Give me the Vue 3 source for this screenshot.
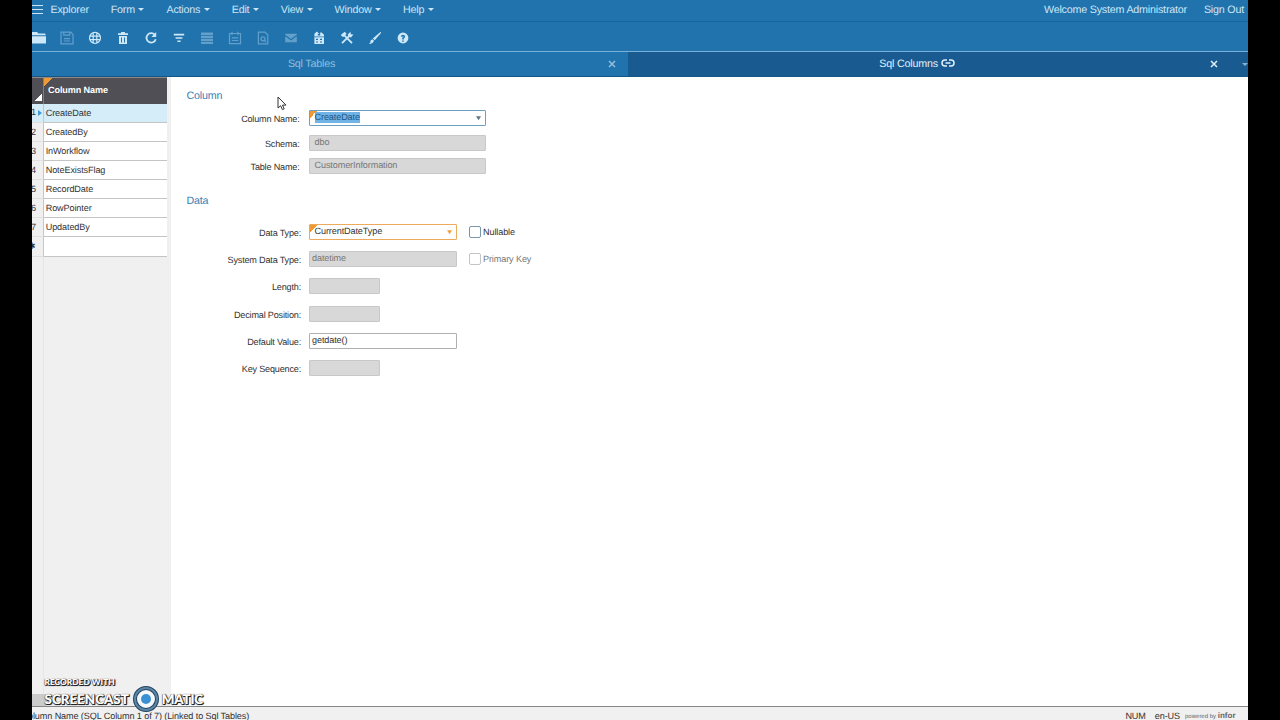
<script setup>
import { ref } from 'vue'

const menus = ['Form', 'Actions', 'Edit', 'View', 'Window', 'Help']

// Each tool has a filled part and / or a stroked part, on a 16x16 grid
const tools = [
  { name: 'Open', fill: 'M0 3.2Q0 2 1.2 2H6L7.4 3.6H13.6Q14.6 3.6 14.6 4.6V5.2H0ZM0 6.2H15V13.6H0Z' },
  { name: 'Save', dim: true, stroke: 'M2 2.2H11.8L14 4.4V13.8H2ZM4.8 2.5V5.2H10.8V2.5M5 8.6H11M5 11H11' },
  { name: 'Globe', stroke: 'M8 2.4A5.5 5.5 0 1 0 8 13.4A5.5 5.5 0 1 0 8 2.4ZM2.7 6.2H13.3M2.7 9.7H13.3M6.2 2.8V13M9.8 2.8V13' },
  { name: 'Delete', fill: 'M6 2H10V3.2H13V5H3V3.2H6ZM4 6H12V14H4ZM6 7.5V12.4H7V7.5ZM9 7.5V12.4H10V7.5Z' },
  { name: 'Refresh', stroke: 'M11.8 4.9A4.7 4.7 0 1 0 12.7 9.2', fill: 'M13.2 2V7H8.4Z', bold: true },
  { name: 'Filter', fill: 'M2.8 3.8H13.2V5.5H2.8ZM4.6 7.2H11.4V8.8H4.6ZM6.4 10.4H9.6V12H6.4Z' },
  { name: 'Rows', dim: true, fill: 'M2 2.4H14V5H2ZM2 5.8H14V8H2ZM2 8.8H14V11H2ZM2 11.8H14V14H2Z' },
  { name: 'Notes', dim: true, stroke: 'M2.5 3.5H13.5V13.6H2.5ZM5 1.8V5M11 1.8V5M4.8 7.8H11.2M4.8 10.5H11.2' },
  { name: 'Preview', dim: true, stroke: 'M3.4 2.2H10L12.8 5V13.8H3.4ZM8 6.8A2 2 0 1 0 8 10.8A2 2 0 1 0 8 6.8ZM9.4 10.2L11 12' },
  { name: 'Mail', dim: true, fill: 'M2.2 3.8H13.8V4.8L8 9L2.2 4.8ZM2.2 6.3L8 10.6L13.8 6.3V12.2H2.2Z' },
  { name: 'Attach', fill: 'M5.8 1.6L8.4 4H6.8V5.4H9.2V2.4H10.6L13 4.8V6.6H3.4V4H3.2ZM3.4 7.2H13V14H3.4ZM5 8.8V10H7V8.8ZM9 8.8V10H11V8.8ZM5 11.4V12.6H7V11.4ZM9 11.4V12.6H11V11.4Z' },
  { name: 'Tools', stroke: 'M4.4 4.4L13 13.2M10.6 5.6L3 13.2', fill: 'M1.8 5L5.6 1.8L7.6 3.8L4 7.2ZM8.8 4.6L11.4 1.8L11.8 4.2L14.4 4.6L12 7.4L9.4 6.8Z', bold: true },
  { name: 'Brush', fill: 'M13.4 2L14.2 2.8L7.8 10.2L5.8 8.6ZM5.2 9.2L7 10.8Q6 13.8 2 14Q4 12.2 3.6 10.4Z' },
  { name: 'Help', fill: 'M8 2.6A5.4 5.4 0 1 0 8 13.4A5.4 5.4 0 1 0 8 2.6ZM5.8 6.6Q6 4.8 8 4.8Q10.2 4.8 10.2 6.6Q10.2 7.8 8.8 8.6V9.6H7.2V7.8Q8.8 7.2 8.6 6.6Q8.4 6.2 8 6.2Q7.4 6.2 7.4 6.9ZM7.2 10.4H8.8V11.8H7.2Z' }
]

const columns = ['CreateDate', 'CreatedBy', 'InWorkflow', 'NoteExistsFlag', 'RecordDate', 'RowPointer', 'UpdatedBy']
const selected = ref(0)
const nullable = ref(false)
</script>

<template>
  <div class="app">
    <nav class="menu-bar">
      <span class="burger"><i></i><i></i><i></i></span>
      <span class="explorer">Explorer</span>
      <span v-for="menu in menus" :key="menu" class="menu-item">{{ menu }}<i class="caret"></i></span>
      <span class="welcome">Welcome System Administrator</span>
      <span class="sign-out">Sign Out</span>
    </nav>

    <div class="tool-bar">
      <span v-for="tool in tools" :key="tool.name" class="tool" :class="{ dim: tool.dim, bold: tool.bold }">
        <svg viewBox="0 0 16 16" width="16" height="16">
          <path v-if="tool.fill" class="filled" :d="tool.fill" />
          <path v-if="tool.stroke" class="stroked" :d="tool.stroke" />
        </svg>
      </span>
    </div>

    <div class="tabs">
      <div class="tab">
        <span class="tab-title">Sql Tables</span>
        <svg class="close" viewBox="0 0 8 8" width="8" height="8"><path d="M1 1L7 7M7 1L1 7" /></svg>
      </div>
      <div class="tab active">
        <span class="tab-title">Sql Columns
          <svg class="link" viewBox="0 0 14 8" width="14" height="8"><path d="M6 1H4A3 3 0 0 0 4 7H6M8 1H10A3 3 0 0 1 10 7H8M4.5 4H9.5" /></svg>
        </span>
        <svg class="close" viewBox="0 0 8 8" width="8" height="8"><path d="M1 1L7 7M7 1L1 7" /></svg>
        <i class="caret"></i>
      </div>
    </div>

    <main class="content">
      <aside class="side">
        <div class="grid-head">
          <span class="corner"></span>
          <span class="head-name">Column Name</span>
        </div>
        <div
          v-for="(column, index) in columns"
          :key="column"
          class="grid-row"
          :class="{ selected: selected === index }"
          @click="selected = index"
        >
          <span class="row-number"><b>{{ index + 1 }}</b></span>
          <span class="row-name">{{ column }}</span>
        </div>
        <div class="grid-row">
          <span class="row-number new"><b>✱</b></span>
          <span class="row-name"></span>
        </div>
        <div class="side-fill"></div>
        <div class="side-scroll"></div>
      </aside>

      <section class="form">
        <h2>Column</h2>
        <div class="fields first">
          <div class="field name">
            <label>Column Name:</label>
            <div class="box wide focused marked"><mark>CreateDate</mark><i class="arrow"></i></div>
          </div>
          <div class="field schema">
            <label>Schema:</label>
            <div class="box wide disabled inset">dbo</div>
          </div>
          <div class="field table">
            <label>Table Name:</label>
            <div class="box wide disabled inset">CustomerInformation</div>
          </div>
        </div>

        <h2>Data</h2>
        <div class="fields second">
          <div class="field">
            <label>Data Type:</label>
            <div class="box medium required marked">CurrentDateType<i class="arrow"></i></div>
            <span class="check" @click="nullable = !nullable"><i :class="{ on: nullable }"></i>Nullable</span>
          </div>
          <div class="field">
            <label>System Data Type:</label>
            <div class="box medium disabled">datetime</div>
            <span class="check off"><i></i>Primary Key</span>
          </div>
          <div class="field">
            <label>Length:</label>
            <div class="box small disabled"></div>
          </div>
          <div class="field">
            <label>Decimal Position:</label>
            <div class="box small disabled"></div>
          </div>
          <div class="field">
            <label>Default Value:</label>
            <div class="box medium">getdate()</div>
          </div>
          <div class="field">
            <label>Key Sequence:</label>
            <div class="box small disabled"></div>
          </div>
        </div>
      </section>
    </main>

    <footer class="status">
      <span class="status-text">olumn Name (SQL Column 1 of 7) (Linked to Sql Tables)</span>
      <span class="num">NUM</span>
      <span class="locale">en-US</span>
      <span class="powered">powered by <b>infor</b></span>
    </footer>

    <div class="watermark">
      <div class="recorded">RECORDED WITH</div>
      <div class="brand">
        <span class="screencast">SCREENCAST</span>
        <svg viewBox="0 0 26 26" width="26" height="26">
          <circle class="ring-outer" cx="13" cy="13" r="11" />
          <circle class="ring" cx="13" cy="13" r="11" />
          <circle class="dot" cx="13" cy="13" r="5" />
        </svg>
        <span class="matic">MATIC</span>
      </div>
    </div>

    <svg class="pointer" viewBox="0 0 10 15" width="10" height="15">
      <path d="M1 1V12L3.6 9.7L5.4 13.6L7.2 12.8L5.5 9.1H9Z" />
    </svg>
  </div>
</template>

<style>
body {
  background: #000;
}
</style>

<style scoped>
.app {
  position: relative;
  display: flex;
  flex-direction: column;
  width: 1216px;
  height: 720px;
  margin: 0 auto;
  overflow: hidden;
  background: #fff;
  color: #333;
  font-family: "Liberation Sans", Arial, sans-serif;
  font-size: 9.1px;
  letter-spacing: -0.11px;
  text-rendering: geometricPrecision;
  white-space: nowrap;
}

.caret {
  width: 0;
  height: 0;
  border: 3px solid transparent;
  border-top-color: currentColor;
  border-bottom: 0;
}

.menu-bar {
  display: flex;
  align-items: center;
  box-sizing: border-box;
  height: 22px;
  padding: 0 4px 2px 0;
  background: #2173ae;
  border-bottom: 1px solid #17639b;
  color: #cde6f6;
  font-size: 10.7px;
  letter-spacing: -0.19px;
}

.burger {
  display: flex;
  flex-direction: column;
  gap: 3px;
  width: 11px;
  margin-right: 7.5px;
}

.burger i {
  height: 1px;
  background: #cde6f6;
}

.menu-item {
  display: flex;
  align-items: center;
  gap: 3.5px;
  margin-left: 22px;
}

.welcome {
  margin-left: auto;
}

.sign-out {
  margin-left: 17px;
}

.tool-bar {
  display: flex;
  align-items: center;
  box-sizing: border-box;
  height: 30px;
  padding-top: 3px;
  padding-bottom: 1px;
  background: #2173ae;
  border-bottom: 1px solid #79b1d8;
}

.tool {
  display: flex;
  flex: none;
  justify-content: center;
  width: 28px;
}

.tool:first-child {
  margin-left: -7.5px;
}

.filled {
  fill: #cde8f8;
  fill-rule: evenodd;
}

.stroked {
  fill: none;
  stroke: #cde8f8;
  stroke-width: 1.2;
}

.bold .stroked {
  stroke-width: 1.8;
}

.dim {
  opacity: 0.38;
}

.tabs {
  display: flex;
  box-sizing: border-box;
  height: 25px;
  background: #2173ae;
  border-bottom: 1px solid #155686;
  font-size: 10.7px;
  letter-spacing: -0.19px;
}

.tab {
  display: flex;
  align-items: center;
  box-sizing: border-box;
  width: 597px;
  padding-right: 12px;
  color: #93bfdf;
  border-right: 1px solid #165a90;
}

.tab-title {
  flex: 1;
  padding-right: 17px;
  text-align: center;
}

.tab.active {
  flex: 1;
  padding-right: 0;
  overflow: hidden;
  background: #195b90;
  border-right: 0;
  color: #e0f0fb;
}

.tab.active .tab-title {
  padding-right: 5px;
}

.tab.active .close {
  margin-right: 24px;
}

.tab.active .caret {
  flex: none;
  color: #84b2d3;
}

.close path,
.link path {
  fill: none;
  stroke: currentColor;
  stroke-width: 1.5;
}

.content {
  display: flex;
  flex: 1;
  min-height: 0;
}

.side {
  display: flex;
  flex-direction: column;
  width: 139px;
  background: #f0f0f0;
}

.grid-head,
.grid-row {
  display: flex;
  flex: none;
  width: 135px;
}

.grid-head {
  height: 26.5px;
  background: #504f56;
  border-top: 1px solid #918983;
  box-sizing: border-box;
  color: #fff;
  font-weight: bold;
}

.corner {
  width: 12px;
  box-sizing: border-box;
  border-right: 1px solid #8c7c70;
  background: linear-gradient(135deg, transparent 50%, #fff 50%) 3px 16px / 7px 7px no-repeat;
}

.head-name {
  flex: 1;
  padding: 6px 0 0 4px;
  line-height: 12px;
  background: linear-gradient(135deg, #f09a37 50%, transparent 50%) 0 0 / 9px 9px no-repeat;
}

.grid-row {
  height: 19.15px;
  line-height: 19px;
}

.row-number {
  box-sizing: border-box;
  width: 12px;
  overflow: hidden;
  border-right: 1px solid #c6c6c6;
  border-bottom: 1px solid #e0e0e0;
}

.row-number b {
  margin-left: -1px;
  font-weight: normal;
}

.row-number.new b {
  margin-left: -4px;
  font-size: 9px;
}

.row-name {
  flex: 1;
  box-sizing: border-box;
  padding-left: 1.7px;
  background: #fff;
  border-bottom: 1px solid #c4c4c4;
}

.selected .row-name,
.selected .row-number {
  background: #d5edf8;
}

.selected .row-number {
  display: flex;
  align-items: center;
}

.selected .row-number::after {
  content: "";
  margin-left: 2px;
  border: 3px solid transparent;
  border-left: 4px solid #3f9bd6;
  border-right: 0;
}

.side-fill {
  flex: 1;
  width: 11px;
  border-right: 1px solid #e6e6e6;
}

.side-scroll {
  width: 14px;
  height: 12px;
  background: #cbcbcb;
}

.form {
  flex: 1;
  padding: 12px 0 0 15.5px;
}

h2 {
  margin: 0;
  color: #3a80b4;
  font-size: 10.7px;
  font-weight: normal;
  letter-spacing: -0.19px;
  line-height: 14px;
}

.fields {
  display: flex;
  flex-direction: column;
}

.first {
  padding-top: 7px;
  height: 84px;
}

.second {
  padding-top: 16px;
  gap: 11.2px;
}

.field {
  display: flex;
  height: 16px;
}

.schema {
  margin-top: 9px;
}

.table {
  margin-top: 7px;
}

.field label {
  width: 114.5px;
  margin-right: 8px;
  padding-top: 1px;
  letter-spacing: -0.19px;
  line-height: 16px;
  text-align: right;
}

.first label {
  width: 113px;
  margin-right: 9.5px;
  padding-top: 0.5px;
}

.box {
  display: flex;
  align-items: center;
  justify-content: space-between;
  box-sizing: border-box;
  height: 16px;
  padding: 0 4px 0.5px 2px;
  border: 1px solid #b0b0b0;
  border-radius: 1px;
  background: #fff;
  line-height: 11px;
}

.wide {
  width: 177px;
}

.medium {
  width: 148px;
}

.small {
  width: 71px;
}

.inset {
  padding-left: 4.5px;
}

.disabled {
  background: #d8d8d8;
  border-color: #c8c8c8;
  color: #777;
}

.marked {
  padding-left: 4.5px;
  background: linear-gradient(135deg, #f09a37 50%, transparent 50%) 0 0 / 7px 7px no-repeat #fff;
}

.focused {
  border-color: #6d9fbf;
}

.required {
  border-color: #edaa5c;
}

.arrow {
  width: 5px;
  height: 4px;
  margin-top: 1px;
  background: #5c7684;
  clip-path: polygon(0 0, 100% 0, 50% 100%);
}

.required .arrow {
  background: #ee9f42;
}

mark {
  background: #72b3e6;
  color: #1b5688;
}

.check {
  display: flex;
  align-items: center;
  margin-left: 11.5px;
  margin-top: -1px;
}

.check i {
  box-sizing: border-box;
  width: 12px;
  height: 12px;
  margin-right: 2.5px;
  border: 1px solid #7897a8;
  border-radius: 2px;
}

.check i.on {
  background: #3a80b4;
}

.check.off {
  color: #777;
}

.check.off i {
  border-color: #c4c4c4;
}

.status {
  display: flex;
  box-sizing: border-box;
  height: 14px;
  padding: 3px 12.5px 0 0;
  overflow: hidden;
  background: #f0f0f0;
  border-top: 1px solid #858585;
  line-height: 12px;
}

.status-text {
  margin-left: -4px;
}

.num {
  margin-left: auto;
}

.locale {
  margin-left: 9px;
}

.powered {
  margin-left: 5px;
  color: #666;
  font-size: 6px;
  letter-spacing: 0;
}

.powered b {
  font-size: 8px;
}

.watermark {
  position: absolute;
  left: 12.5px;
  top: 677px;
  color: #fff;
  font-family: Lato, "Open Sans", sans-serif;
  font-weight: 900;
  letter-spacing: 0;
  text-shadow: 1px 1px 0 #222, -0.5px -0.5px 0 #666, 1px 0 1px #222, 0 1px 1px #222;
}

.recorded {
  font-size: 8.4px;
  line-height: 10px;
}

.brand {
  display: flex;
  align-items: center;
  margin-top: -1px;
  font-size: 13.4px;
}

.brand svg {
  margin: 0 3px 0 4px;
}

.matic {
  letter-spacing: -0.2px;
}

.ring-outer {
  fill: #f4f8fa;
  stroke: #24425e;
  stroke-width: 4;
}

.ring {
  fill: none;
  stroke: #5a86a8;
  stroke-width: 2;
}

.dot {
  fill: #3b8fd4;
}

.pointer {
  position: absolute;
  left: 245px;
  top: 96px;
}

.pointer path {
  fill: #fff;
  stroke: #333;
  stroke-width: 1;
}
</style>
